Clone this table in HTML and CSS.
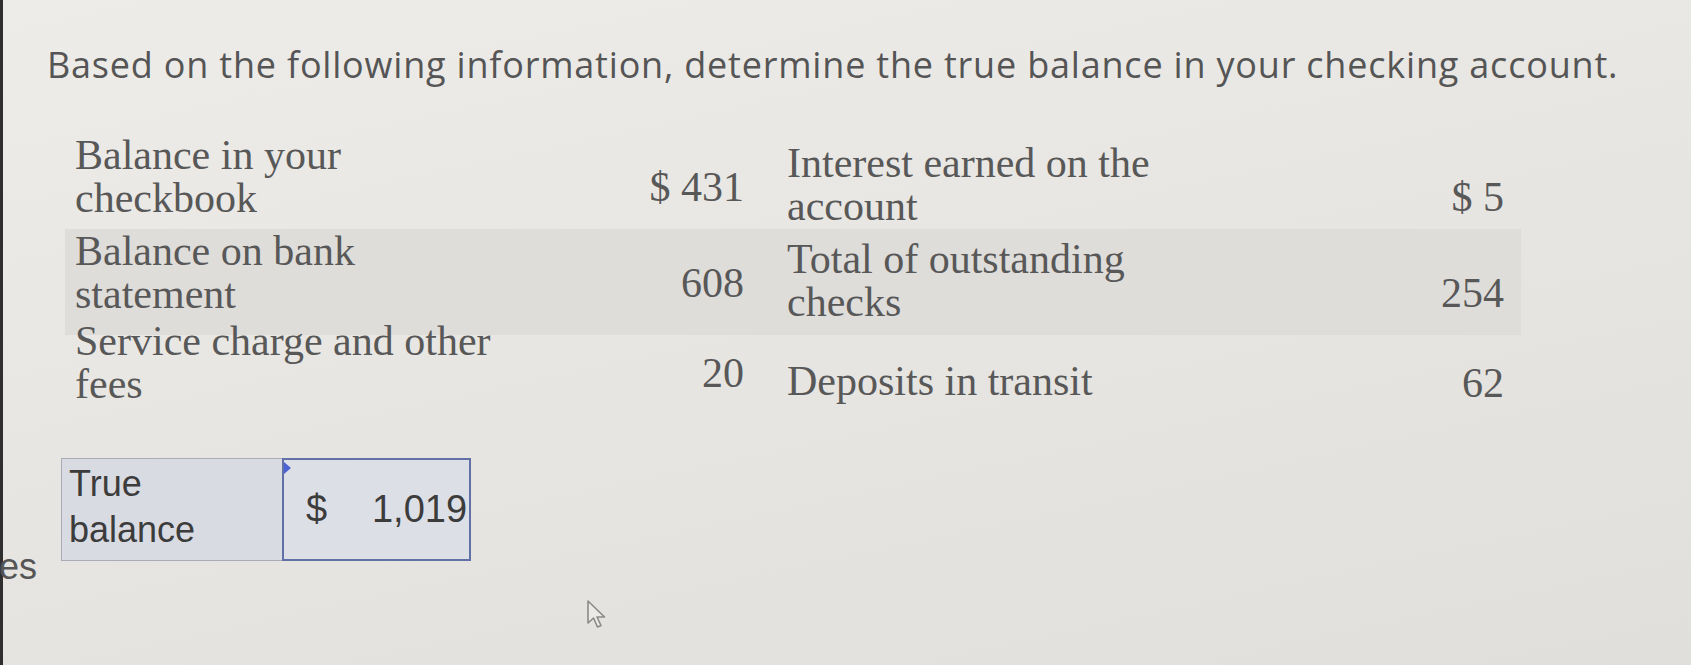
FILE: index.html
```html
<!DOCTYPE html>
<html lang="en">
<head>
<meta charset="utf-8">
<title>True balance</title>
<link rel="stylesheet" href="styles.css">
</head>
<body>
<div class="screen">
  <h1 class="prompt">Based on the following information, determine the true balance in your checking account.</h1>

  <div class="data">
    <div class="row first">
      <div class="label">Balance in your<br>checkbook</div>
      <div class="value">$ 431</div>
      <div class="label label2">Interest earned on the<br>account</div>
      <div class="value value2">$ 5</div>
    </div>
    <div class="row shaded">
      <div class="label">Balance on bank<br>statement</div>
      <div class="value">608</div>
      <div class="label label2">Total of outstanding<br>checks</div>
      <div class="value value2">254</div>
    </div>
    <div class="row last">
      <div class="label">Service charge and other<br>fees</div>
      <div class="value">20</div>
      <div class="label label2 single">Deposits in transit</div>
      <div class="value value2">62</div>
    </div>
  </div>

  <div class="answer-line">
    <span class="cut">es</span>
    <div class="answer">
      <div class="answer-label">True<br>balance</div>
      <div class="answer-cell">
        <span class="marker"></span>
        <span class="cur">$</span>
        <span class="amount">1,019</span>
      </div>
    </div>
  </div>

  <svg class="cursor" width="22" height="32" viewBox="0 0 22 32" aria-hidden="true">
    <path d="M2 2 L2 24 L7.5 19 L11.5 28 L15 26.5 L11 18 L18.5 18 Z" fill="#eceae6" stroke="#8a8a8a" stroke-width="1.6" stroke-linejoin="round"/>
  </svg>
</div>
</body>
</html>
```

FILE: styles.css
```css
* { box-sizing: border-box; }

html, body {
  margin: 0;
  padding: 0;
  height: 100%;
}

body {
  background: linear-gradient(168deg, #eeece9 0%, #e8e6e2 45%, #e1dfdb 100%);
  overflow: hidden;
}

.screen {
  position: relative;
  height: 665px;
  border-left: 3px solid #2f2f2f;
  padding-top: 44px;
}

.prompt {
  margin: 0 0 0 44px;
  font-family: "Open Sans", Lato, sans-serif;
  font-weight: 400;
  font-size: 36px;
  line-height: 41px;
  letter-spacing: 0.8px;
  color: #555555;
  white-space: nowrap;
}

.data {
  margin: 45px 0 0 62px;
  width: 1456px;
  font-family: "Liberation Serif", "Times New Roman", serif;
  font-size: 42px;
  line-height: 43px;
  color: #585858;
}

.row {
  display: grid;
  grid-template-columns: 480px 189px 556px 204px;
  align-items: center;
  padding: 4px 17px 4px 10px;
}

.row.first { padding-bottom: 9px; }

.row.shaded {
  background: #dfddda;
  padding-top: 1px;
  padding-bottom: 19px;
}

.row.last {
  margin-top: -15px;
  padding-top: 0;
}

.label {
  white-space: nowrap;
}

.label2 {
  padding-left: 43px;
  padding-top: 8px;
  margin-bottom: -8px;
}

.label.single { padding-top: 28px; }

.value {
  text-align: right;
  white-space: nowrap;
  padding-top: 20px;
}

.value2 { padding-top: 40px; }

.answer-line {
  display: flex;
  align-items: flex-end;
  margin-top: 48px;
}

.cut {
  font-family: "Liberation Sans", Arial, sans-serif;
  font-size: 36px;
  line-height: 36px;
  color: #555;
  margin-left: -4px;
  margin-bottom: -24px;
}

.answer {
  display: flex;
  margin-left: 24px;
  height: 103px;
  border: 1px solid #a9acb6;
  font-family: "Liberation Sans", Arial, sans-serif;
  font-size: 36px;
  color: #3c3c3c;
}

.answer-label {
  width: 220px;
  background: #d9dbe2;
  padding: 2px 0 0 7px;
  line-height: 46px;
}

.answer-cell {
  position: relative;
  width: 189px;
  margin: -1px -1px -1px 0;
  border: 2px solid #6170a6;
  background: #dddfe6;
  display: flex;
  align-items: center;
  justify-content: space-between;
  padding: 0 2px 0 22px;
  font-size: 38px;
}

.marker {
  position: absolute;
  left: 0;
  top: 2px;
  width: 0;
  height: 0;
  border-top: 6px solid transparent;
  border-bottom: 6px solid transparent;
  border-left: 7px solid #4a62d4;
}

.cursor {
  position: absolute;
  left: 583px;
  top: 599px;
}
```
